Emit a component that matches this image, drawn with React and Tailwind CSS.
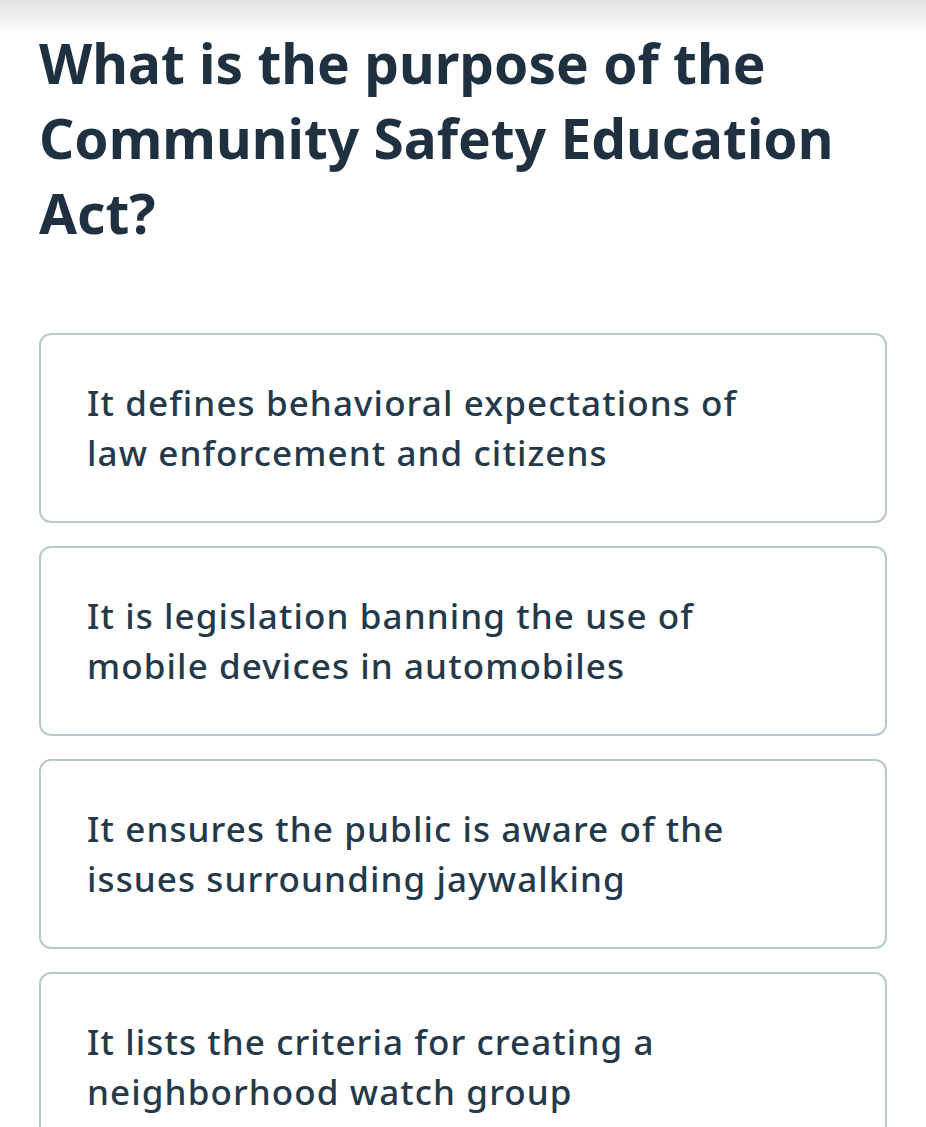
import React from 'react';

const answers = [
  ['It defines behavioral expectations of', 'law enforcement and citizens'],
  ['It is legislation banning the use of', 'mobile devices in automobiles'],
  ['It ensures the public is aware of the', 'issues surrounding jaywalking'],
  ['It lists the criteria for creating a', 'neighborhood watch group'],
];

const AnswerCard = ({ lines }) => (
  <div className="rounded-xl border-2 border-[#b7c9cd] bg-white px-[46px] py-[43px]">
    <p className="whitespace-nowrap text-[35px] font-medium leading-[50px] tracking-[1.1px] text-[#24394a]">
      {lines[0]}
      <br />
      {lines[1]}
    </p>
  </div>
);

export default function App() {
  return (
    <div className="min-h-[1127px] w-[926px] bg-white font-['Noto_Sans',sans-serif]">
      <div className="h-[34px] bg-gradient-to-b from-[#dfe1e3] to-white"></div>
      <div className="px-[39px]">
        <h1 className="-mt-[9px] whitespace-nowrap text-[55px] font-bold leading-[75px] text-[#1f3140]">
          What is the purpose of the
          <br />
          Community Safety Education
          <br />
          Act?
        </h1>
        <div className="mt-[83px] flex w-[848px] flex-col gap-[23px]">
          {answers.map((a) => (
            <AnswerCard key={a[0]} lines={a} />
          ))}
        </div>
      </div>
    </div>
  );
}
